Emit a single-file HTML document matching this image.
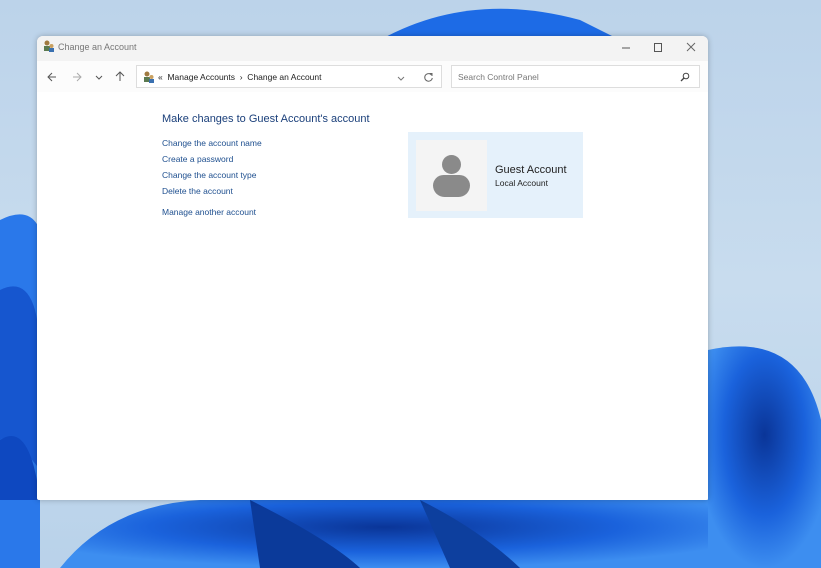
<!DOCTYPE html>
<html><head><meta charset="utf-8"><style>
body{margin:0;width:821px;height:568px;overflow:hidden;position:relative;font-family:"Liberation Sans",sans-serif;background:linear-gradient(180deg,#bcd3ea 0%,#c8dcee 50%,#b9d2ea 100%);}
.win{position:absolute;left:37px;top:36px;width:671px;height:464px;background:#fff;border-radius:6px 6px 2px 2px;box-shadow:0 0 6px rgba(0,0,0,.25);overflow:hidden}
.title{height:25px;background:#f3f3f3;font-size:9px;color:#777;position:relative}
.tb{height:31px;background:#fcfcfc;position:relative}
.addr{position:absolute;left:99px;top:4px;width:306px;height:23px;border:1px solid #ddd;background:#fff;box-sizing:border-box;font-size:8.5px;color:#222}
.search{position:absolute;left:414px;top:4px;width:249px;height:23px;border:1px solid #ddd;background:#fff;box-sizing:border-box;font-size:8.5px;color:#777}
.a{position:absolute;font-size:8.5px;color:#1e4f8f}
svg.i{position:absolute}
</style></head><body>
<svg width="821" height="568" style="position:absolute;left:0;top:0">
<defs><radialGradient id="g" cx="50%" cy="40%" r="60%"><stop offset="0" stop-color="#0a3598"/><stop offset=".6" stop-color="#1a62dc"/><stop offset="1" stop-color="#3d8ef0"/></radialGradient></defs>
<path d="M380 40 Q470 -10 580 20 L620 40 Z" fill="#1d6be6"/>
<path d="M0 220 Q60 190 40 320 L40 568 L0 568 Z" fill="#2a78ea"/>
<path d="M0 290 Q40 270 40 360 L40 470 Q10 430 0 440 Z" fill="#1656cf"/>
<path d="M0 440 Q30 420 40 500 L0 500 Z" fill="#0e48c0"/>
<path d="M708 350 Q800 330 821 420 L821 568 L708 568 Z" fill="url(#g)"/>
<path d="M60 568 Q110 505 200 500 L708 500 L708 568 Z" fill="url(#g)"/>
<path d="M250 500 Q330 540 360 568 L260 568 Z" fill="#0b3a9a"/>
<path d="M420 500 Q480 530 520 568 L450 568 Z" fill="#0d3f9e"/>
</svg>
<div class="win">
 <div class="title">
  <svg width="12" height="12" style="position:absolute;left:6px;top:4px"><circle cx="4" cy="3" r="2.5" fill="#a07a40"/><rect x="1" y="6" width="6" height="5" fill="#5a7a50"/><circle cx="8.5" cy="6" r="2" fill="#c9a060"/><rect x="6" y="8" width="5" height="4" fill="#3a70b0"/></svg>
  <span style="position:absolute;left:21px;top:6px">Change an Account</span>
  <svg class="i" style="left:583px;top:6px" width="12" height="12"><path d="M2 6h8" stroke="#555" stroke-width="1"/></svg>
  <svg class="i" style="left:615px;top:6px" width="12" height="12"><rect x="2.5" y="1.5" width="7" height="8" fill="none" stroke="#555"/></svg>
  <svg class="i" style="left:648px;top:5px" width="12" height="12"><path d="M2 2l8 8M10 2l-8 8" stroke="#666"/></svg>
 </div>
 <div class="tb">
  <svg class="i" style="left:9px;top:10px" width="12" height="12"><path d="M10 6H2M6 2L2 6l4 4" fill="none" stroke="#555"/></svg>
  <svg class="i" style="left:34px;top:10px" width="12" height="12"><path d="M2 6h8M6 2l4 4-4 4" fill="none" stroke="#aaa"/></svg>
  <svg class="i" style="left:57px;top:11px" width="10" height="10"><path d="M2 4l3 3 3-3" fill="none" stroke="#555"/></svg>
  <svg class="i" style="left:77px;top:9px" width="12" height="12"><path d="M6 11V2M2 6l4-4 4 4" fill="none" stroke="#555"/></svg>
  <div class="addr">
   <svg width="12" height="12" style="position:absolute;left:6px;top:5px"><circle cx="4" cy="3" r="2.5" fill="#a07a40"/><rect x="1" y="6" width="6" height="5" fill="#5a7a50"/><circle cx="8.5" cy="6" r="2" fill="#c9a060"/><rect x="6" y="8" width="5" height="4" fill="#3a70b0"/></svg>
   <span style="position:absolute;left:21px;top:6px">« &nbsp;Manage Accounts &nbsp;›&nbsp; Change an Account</span>
   <svg class="i" style="left:259px;top:7px" width="10" height="10"><path d="M2 4l3 3 3-3" fill="none" stroke="#777"/></svg>
   <svg class="i" style="left:286px;top:6px" width="11" height="11"><path d="M8.5 3A3.8 3.8 0 1 0 9.3 6" fill="none" stroke="#666"/><path d="M6.5 1.5h2.5v2.5" fill="none" stroke="#666"/></svg>
  </div>
  <div class="search"><span style="position:absolute;left:6px;top:6px">Search Control Panel</span>
   <svg class="i" style="left:228px;top:6px" width="10" height="10"><circle cx="6" cy="4" r="2.8" fill="none" stroke="#444"/><path d="M4 6L1 9" stroke="#444" stroke-width="1.3"/></svg></div>
 </div>
 <div style="position:absolute;left:125px;top:77px;font-size:11px;color:#1a3f7a">Make changes to Guest Account's account</div>
 <div class="a" style="left:125px;top:102px">Change the account name</div>
 <div class="a" style="left:125px;top:118px">Create a password</div>
 <div class="a" style="left:125px;top:134px">Change the account type</div>
 <div class="a" style="left:125px;top:150px">Delete the account</div>
 <div class="a" style="left:125px;top:171px">Manage another account</div>
 <div style="position:absolute;left:371px;top:96px;width:175px;height:86px;background:#e5f1fb">
  <div style="position:absolute;left:8px;top:8px;width:71px;height:71px;background:#f4f4f4">
   <div style="position:absolute;left:26px;top:15px;width:19px;height:19px;border-radius:50%;background:#8a8a8a"></div>
   <div style="position:absolute;left:17px;top:35px;width:37px;height:22px;border-radius:11px 11px 12px 12px;background:#8a8a8a"></div>
  </div>
  <div style="position:absolute;left:87px;top:32px;font-size:11px;color:#222">Guest Account</div>
  <div style="position:absolute;left:87px;top:46px;font-size:8.5px;color:#222">Local Account</div>
 </div>
</div>
</body></html>
